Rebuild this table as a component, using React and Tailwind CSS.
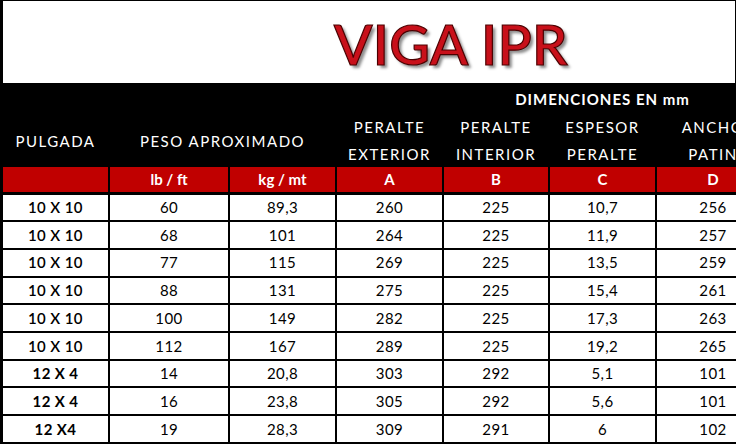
import React from 'react'

const cols = 'grid w-max grid-cols-[105px_118px_105px_105px_104px_105px_112px] gap-x-[2px]'

const rows = [
  ['10 X 10', '60', '89,3', '260', '225', '10,7', '256'],
  ['10 X 10', '68', '101', '264', '225', '11,9', '257'],
  ['10 X 10', '77', '115', '269', '225', '13,5', '259'],
  ['10 X 10', '88', '131', '275', '225', '15,4', '261'],
  ['10 X 10', '100', '149', '282', '225', '17,3', '263'],
  ['10 X 10', '112', '167', '289', '225', '19,2', '265'],
  ['12 X 4', '14', '20,8', '303', '292', '5,1', '101'],
  ['12 X 4', '16', '23,8', '305', '292', '5,6', '101'],
  ['12 X4', '19', '28,3', '309', '291', '6', '102'],
]

const HeadLabel = ({ top, bottom, col }) => (
  <div className={`${col} row-start-2 flex flex-col items-center justify-center leading-[27px] tracking-[1.5px]`}>
    <span>{top}</span>
    <span>{bottom}</span>
  </div>
)

const App = () => {
  return (
    <div className="w-[736px] h-[444px] overflow-hidden bg-black pt-[1px] pl-[3px] font-['Lato',sans-serif]">
      {/* Title */}
      <div className="h-[82px] bg-white mr-[1px] flex items-center pl-[331px]">
        <h1 className="text-[56px] font-semibold leading-none text-[#c8101a] tracking-[0.3px] [-webkit-text-stroke:1.2px_#4a0000] [text-shadow:3px_3px_3px_rgba(0,0,0,0.45)] mt-[3px]">
          VIGA IPR
        </h1>
      </div>

      {/* Header */}
      <div className={`${cols} grid-rows-[32px_52px] h-[84px] text-white text-[15px]`}>
        <div className="col-start-5 col-span-3 row-start-1 flex items-center justify-center font-bold tracking-[1px] pr-[8px]">
          DIMENCIONES EN mm
        </div>
        <div className="col-start-1 row-start-2 flex items-center justify-center tracking-[1.5px]">PULGADA</div>
        <div className="col-start-2 col-span-2 row-start-2 flex items-center justify-center tracking-[1.5px]">
          PESO APROXIMADO
        </div>
        <HeadLabel col="col-start-4" top="PERALTE" bottom="EXTERIOR" />
        <HeadLabel col="col-start-5" top="PERALTE" bottom="INTERIOR" />
        <HeadLabel col="col-start-6" top="ESPESOR" bottom="PERALTE" />
        <HeadLabel col="col-start-7" top="ANCHO" bottom="PATIN" />
      </div>

      {/* Units row */}
      <div className={`${cols} h-[25px] text-white text-[15px] font-bold`}>
        {['', 'lb / ft', 'kg / mt', 'A', 'B', 'C', 'D'].map((t, i) => (
          <div key={i} className="bg-[#c00000] flex items-center justify-center">
            {t}
          </div>
        ))}
      </div>

      {/* Data */}
      <div className="flex flex-col gap-y-[2px] pt-[2.5px]">
        {rows.map((row, r) => (
          <div key={r} className={`${cols} h-[25.7px] text-[15px] text-black`}>
            {row.map((cell, c) => (
              <div
                key={c}
                className={`bg-white flex items-center justify-center tracking-[0.4px] ${
                  c === 0 ? (r > 5 ? 'font-bold' : 'font-semibold') : ''
                }`}
              >
                {cell}
              </div>
            ))}
          </div>
        ))}
      </div>
    </div>
  )
}

export default App
